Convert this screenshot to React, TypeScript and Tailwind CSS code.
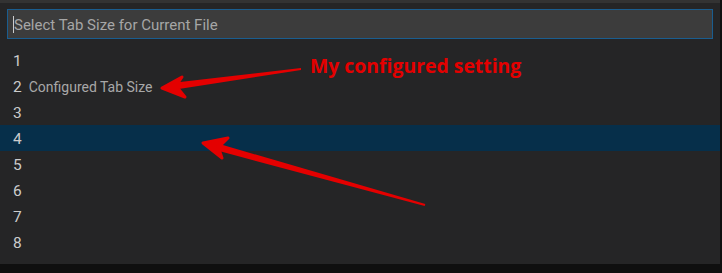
import React from "react";

const sizes = [1, 2, 3, 4, 5, 6, 7, 8];

function Arrows() {
  return (
    <svg className="absolute left-0 top-0 pointer-events-none" width={722} height={273}>
      {/* arrow pointing at "Configured Tab Size" */}
      <polygon points="171.4,83.1 301,68 301,70 172.4,90.1" fill="#e40000" />
      <polygon
        points="162,88 182,77 176,86 185,97"
        fill="#e40000"
        stroke="#e40000"
        strokeWidth={3}
        strokeLinejoin="round"
      />
      {/* arrow pointing at row 4 */}
      <polygon points="213.5,142.3 425.3,204 424.7,206 211.7,149.1" fill="#e40000" />
      <polygon
        points="203,143 228,138 218.4,147.3 222,158"
        fill="#e40000"
        stroke="#e40000"
        strokeWidth={3}
        strokeLinejoin="round"
      />
    </svg>
  );
}

export default function App() {
  return (
    <div className="relative w-[722px] h-[273px] bg-[#0f0f0f] overflow-hidden font-['Roboto',sans-serif]">
      <div className="w-[720px] bg-[#252526]">
        <div className="h-[3px] bg-[#333333]" />
        {/* Quick pick input */}
        <div className="px-[7px] pt-[6px]">
          <div className="h-[30px] w-[706px] border border-[#1a5d8f] bg-[#3c3c3c] flex items-center pl-[5px]">
            <span className="w-px h-[17px] bg-[#cccccc]" />
            <span className="text-[15px] text-[#a6a6a6] leading-[28px] pt-[2px]">Select Tab Size for Current File</span>
          </div>
        </div>

        {/* Options */}
        <div className="pt-[8px] pb-[9px]">
          {sizes.map((n) => (
            <div
              key={n}
              className={`h-[26px] flex items-center pl-[13px] pt-[3px] ${n === 4 ? "bg-[#062f4a]" : ""}`}
            >
              <span className="text-[15.5px] text-[#cccccc] leading-[23px]">{n}</span>
              {n === 2 && (
                <span className="ml-[7px] text-[14px] text-[#a8a8a8] leading-[23px]">Configured Tab Size</span>
              )}
            </div>
          ))}
        </div>
      </div>

      <div className="absolute left-[310px] top-[56px] text-[19.4px] font-bold text-[#e40000] leading-none font-['Open_Sans',sans-serif]">
        My configured setting
      </div>
      <Arrows />
    </div>
  );
}
